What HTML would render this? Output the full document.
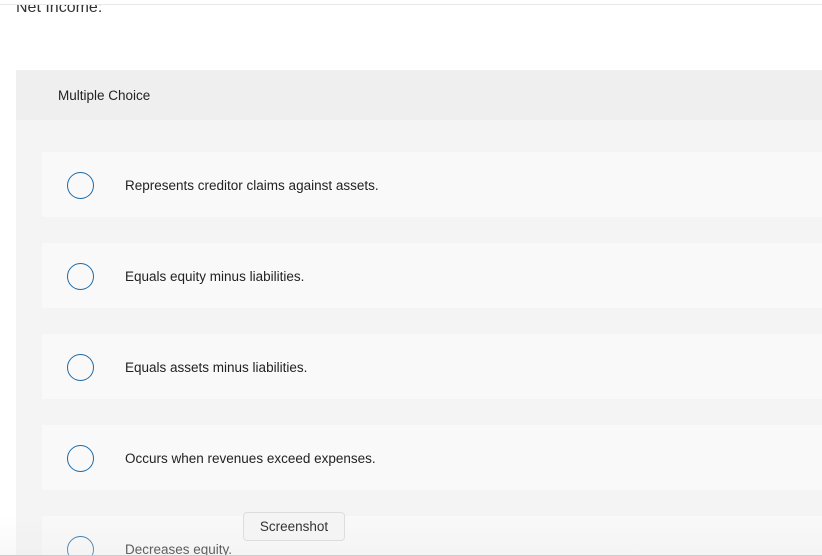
<!DOCTYPE html>
<html style="overflow:hidden;height:556px"><head><style>
body{margin:0;width:822px;height:556px;overflow:hidden;background:#fff;font-family:"Liberation Sans",sans-serif;position:relative;color:#222}
.top{position:absolute;left:0;right:0;top:0;height:4px;border-bottom:1px solid #e8e8e8;background:#fff;z-index:2}
.q{position:absolute;left:16px;top:-1px;font-size:16px;color:#333}
.panel{position:absolute;left:16px;top:70px;width:806px;height:486px;background:#f4f4f4;overflow:hidden}
.hd{height:50px;background:#efefef;font-size:13.5px;line-height:52px;padding-left:42px;color:#222}
.opt{position:absolute;left:26px;width:780px;height:65px;background:#f9f9f9}
.opt .c{position:absolute;left:25px;top:20px;width:25px;height:25px;border:1.5px solid #1f6aa5;border-radius:50%}
.opt .t{position:absolute;left:83px;top:0;line-height:67px;font-size:13.5px;color:#222}
.fade{position:absolute;left:0;right:0;top:515px;height:41px;background:linear-gradient(rgba(255,255,255,0),rgba(235,235,235,.35))}
.tip{position:absolute;left:243px;top:512px;width:100px;height:27px;border:1px solid #ddd;border-radius:4px;background:#f4f4f4;font-size:13.5px;line-height:27px;text-align:center;color:#333}
.bl{position:absolute;left:0;right:0;top:555px;height:1px;background:#ccc}
</style></head><body>
<div class="top"></div>
<div class="q">Net Income:</div>
<div class="panel">
<div class="hd">Multiple Choice</div>
<div class="opt" style="top:82px"><div class="c"></div><div class="t">Represents creditor claims against assets.</div></div>
<div class="opt" style="top:173px"><div class="c"></div><div class="t">Equals equity minus liabilities.</div></div>
<div class="opt" style="top:264px"><div class="c"></div><div class="t">Equals assets minus liabilities.</div></div>
<div class="opt" style="top:355px"><div class="c"></div><div class="t">Occurs when revenues exceed expenses.</div></div>
<div class="opt" style="top:446px"><div class="c"></div><div class="t">Decreases equity.</div></div>
</div>
<div class="fade"></div>
<div class="tip">Screenshot</div>
<div class="bl"></div>
</body></html>
